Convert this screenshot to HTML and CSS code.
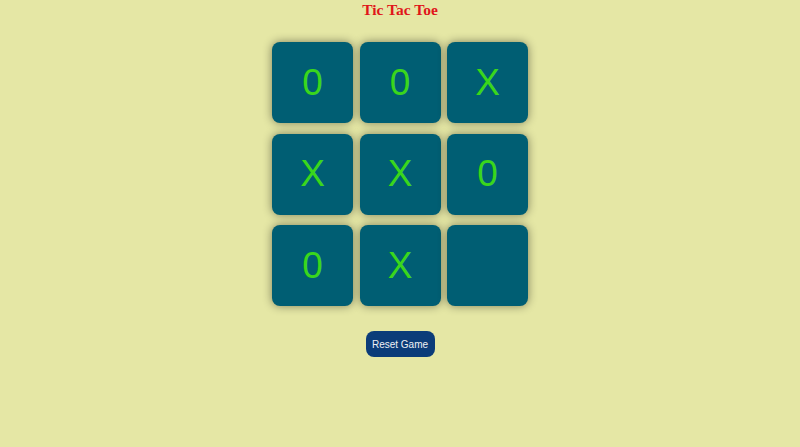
FILE: index.html
```html
<!DOCTYPE html>
<html>
<head>
<meta charset="utf-8">
<title>Tic Tac Toe</title>
<link rel="stylesheet" href="styles.css">
</head>
<body>
<main class="game">
  <h1 class="title">Tic Tac Toe</h1>
  <div class="board">
    <button class="box">0</button>
    <button class="box">0</button>
    <button class="box">X</button>
    <button class="box">X</button>
    <button class="box">X</button>
    <button class="box">0</button>
    <button class="box">0</button>
    <button class="box">X</button>
    <button class="box"></button>
  </div>
  <button class="reset">Reset Game</button>
</main>
</body>
</html>
```
FILE: styles.css
```css
html, body {
  margin: 0;
  padding: 0;
  height: 100%;
}
body {
  background: #e5e7a5;
}
.game {
  display: flex;
  flex-direction: column;
  align-items: center;
}
.title {
  margin: 0;
  padding-top: 1px;
  font-family: "Liberation Serif", "Times New Roman", serif;
  font-weight: bold;
  font-size: 15.5px;
  line-height: 18px;
  color: #e0161a;
}
.board {
  margin-top: 23px;
  display: grid;
  grid-template-columns: repeat(3, 81px);
  grid-auto-rows: 81px;
  column-gap: 6.5px;
  row-gap: 10.5px;
}
.box {
  border: none;
  padding: 0;
  border-radius: 8px;
  background: #005e73;
  box-shadow: 0 0 10px rgba(0, 0, 0, 0.45);
  color: #3ad61c;
  font-family: "Liberation Sans", Arial, sans-serif;
  font-size: 37px;
  display: flex;
  align-items: center;
  justify-content: center;
}
.reset {
  margin-top: 25px;
  border: none;
  width: 69px;
  height: 26px;
  padding: 0;
  border-radius: 8px;
  background: #0b3c79;
  color: #eef0f4;
  font-family: "Liberation Sans", Arial, sans-serif;
  font-size: 10px;
}
```
